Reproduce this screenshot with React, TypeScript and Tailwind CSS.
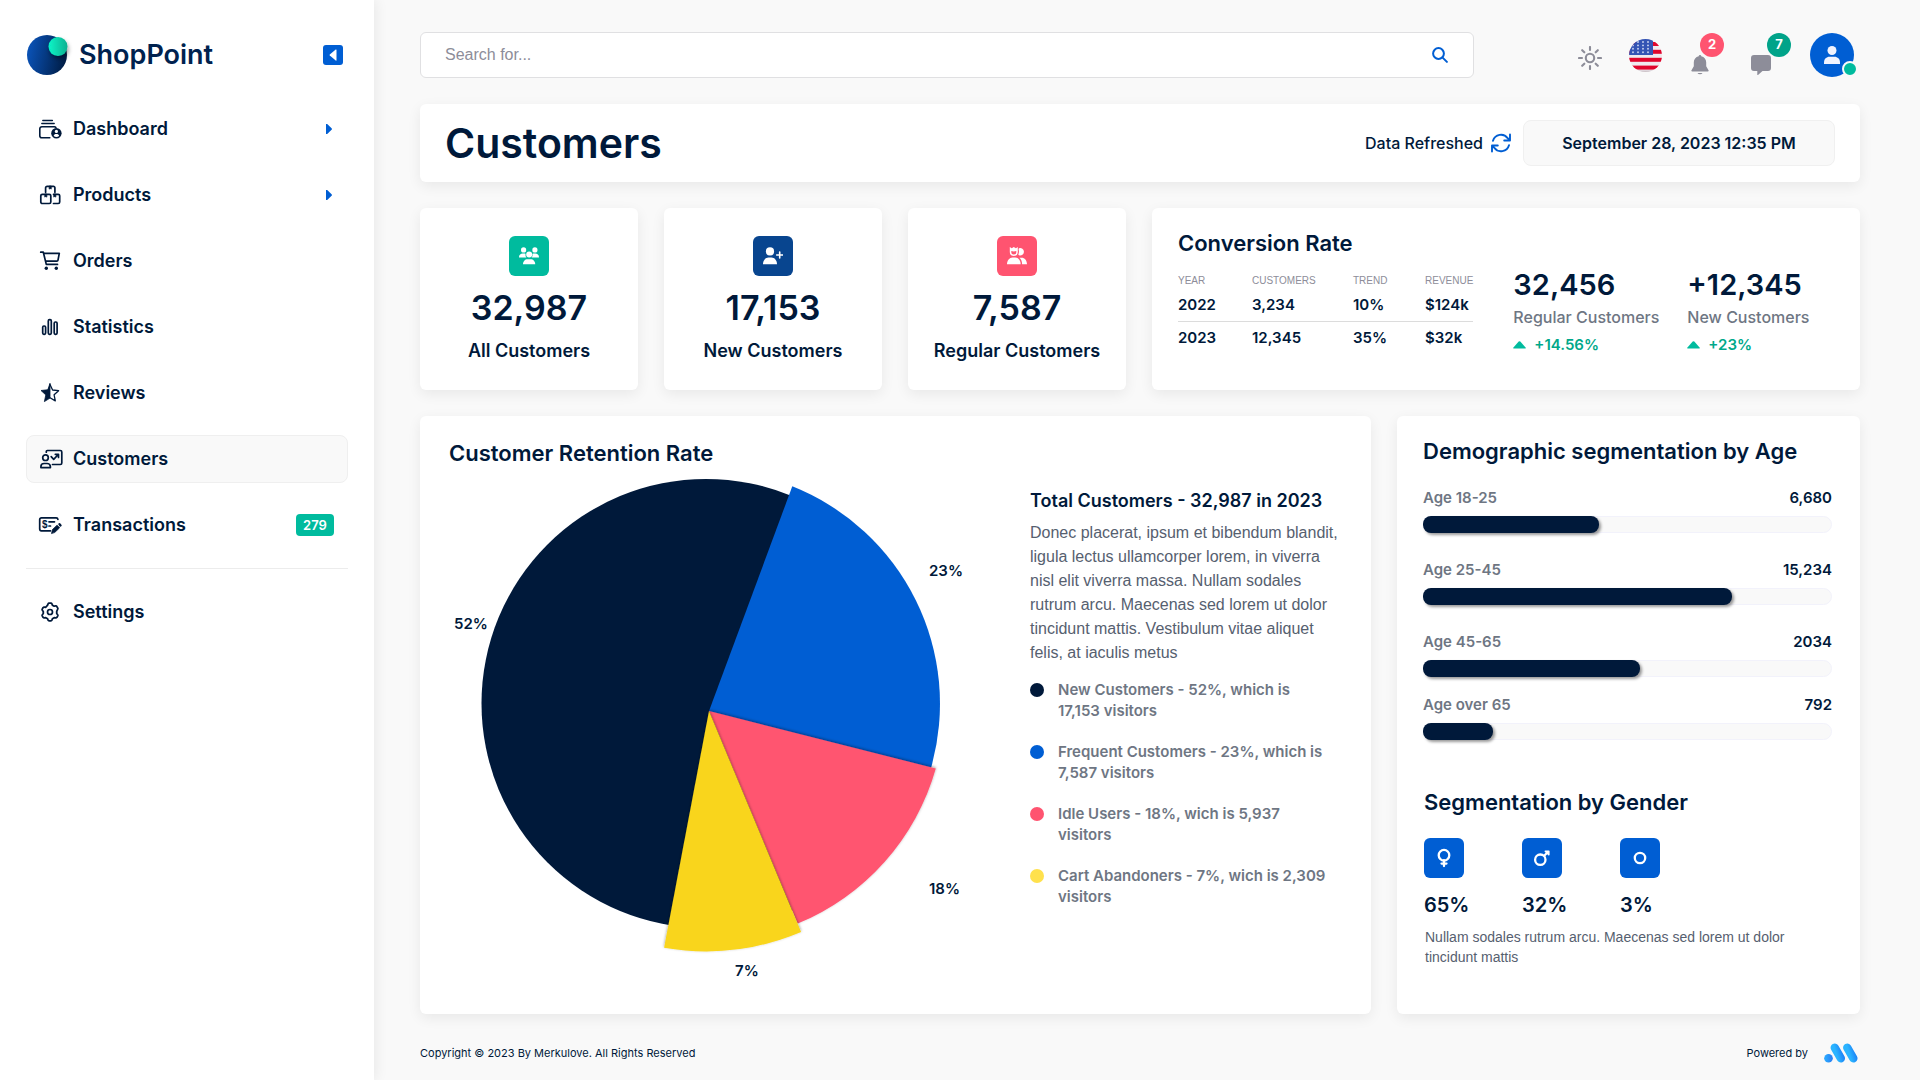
import React from "react";

const CARD = "rounded-md bg-white shadow-[0_4px_14px_rgba(0,0,0,0.07)]";

function LogoMark() {
  return (
    <svg width="42" height="40" viewBox="0 0 42 40" aria-hidden="true" className="shrink-0 overflow-visible">
      <defs>
        <linearGradient id="orb" x1="0" y1="0.4" x2="1" y2="0.6">
          <stop offset="0" stopColor="#0a53b8" />
          <stop offset="1" stopColor="#001c44" />
        </linearGradient>
        <linearGradient id="spot" x1="0" y1="0" x2="1" y2="0">
          <stop offset="0" stopColor="#06f5c8" />
          <stop offset="1" stopColor="#0fb090" />
        </linearGradient>
        <filter id="spotShadow" x="-50%" y="-50%" width="200%" height="200%">
          <feDropShadow dx="1" dy="3" stdDeviation="2" floodColor="#000" floodOpacity="0.4" />
        </filter>
      </defs>
      <circle cx="20" cy="20" r="20" fill="url(#orb)" />
      <circle cx="31" cy="11.5" r="9.5" fill="url(#spot)" filter="url(#spotShadow)" />
    </svg>
  );
}

function NavSvg({ children }: { children: React.ReactNode }) {
  return (
    <svg
      width="24"
      height="24"
      viewBox="0 0 24 24"
      fill="none"
      stroke="#00193a"
      strokeWidth="1.7"
      strokeLinecap="round"
      strokeLinejoin="round"
      aria-hidden="true"
      className="shrink-0 overflow-visible"
    >
      {children}
    </svg>
  );
}

const DashboardIcon = () => (
  <NavSvg>
    <path d="M4.8 3.5h9.6M3.8 6.5h12.400" strokeWidth="1.4" />
    <path d="M11.8 20.8H3.8a2 2 0 0 1-2-2v-7a2 2 0 0 1 2-2h12.400a2 2 0 0 1 1.700.8" strokeWidth="1.6" />
    <circle cx="18.400" cy="16.200" r="5.200" fill="#00193a" stroke="none" />
    <circle cx="18.400" cy="14.400" r="1.600" fill="#fff" stroke="none" />
    <path d="M15.700 18.900c.2-1.400 1.200-2 2.700-2s2.500.6 2.700 2c-1.600 1.300-3.800 1.300-5.400 0z" fill="#fff" stroke="none" />
  </NavSvg>
);

const ProductsIcon = () => (
  <NavSvg>
    <path d="M7.600 9.300V4.800a1.500 1.500 0 0 1 1.500-1.500h6.300a1.500 1.500 0 0 1 1.500 1.500v4.500" />
    <path d="M11.200 3.500v2.600l1-.7 1 .7V3.500z" fill="#00193a" strokeWidth="0.800" />
    <rect x="2.800" y="11.300" width="10" height="9.200" rx="1.500" />
    <path d="M6.800 11.500v2.600l1-.7 1 .7v-2.600z" fill="#00193a" strokeWidth="0.800" />
    <path d="M15.500 11.300h4.700a1.500 1.500 0 0 1 1.500 1.500v6.200a1.500 1.500 0 0 1-1.500 1.500h-4.700" />
    <path d="M15.800 11.500v2.600l1-.7 1 .7v-2.600z" fill="#00193a" strokeWidth="0.800" />
  </NavSvg>
);

const OrdersIcon = () => (
  <NavSvg>
    <path d="M2.700 3.200h2.600l3 12.200h11.200" />
    <path d="M5.800 4.300h15.500l-1.300 6.800a1.200 1.200 0 0 1-1.200 1H7.800" />
    <circle cx="8.300" cy="19.300" r="1.700" fill="#00193a" stroke="none" />
    <circle cx="18.300" cy="19.300" r="1.700" fill="#00193a" stroke="none" />
  </NavSvg>
);

const StatisticsIcon = () => (
  <NavSvg>
    <rect x="4.700" y="11" width="2.900" height="8.300" rx="1.200" />
    <rect x="10.300" y="4.700" width="3" height="14.600" rx="1.200" />
    <rect x="16.200" y="7" width="2.900" height="12.300" rx="1.200" />
  </NavSvg>
);

const ReviewsIcon = () => (
  <NavSvg>
    <path d="M12 3.400l2.600 5.600 6 .7-4.500 4.100 1.200 6.100L12 16.800" strokeWidth="1.300" />
    <path d="M12 2.700v14.400l-5.600 3.500 1.400-6.700L3 9.500l6.500-.7z" fill="#00193a" strokeWidth="0.800" />
  </NavSvg>
);

const CustomersIcon = () => (
  <NavSvg>
    <path d="M8.300 5.200V4.500a1 1 0 0 1 1-1h13a1.500 1.500 0 0 1 1.500 1.500v11a1.500 1.500 0 0 1-1.500 1.500h-7.800" />
    <circle cx="7.500" cy="10.700" r="2.800" />
    <path d="M2.900 20.600v-.8c0-2 1.500-3.300 3.200-3.300h3c1.700 0 3.300 1.300 3.300 3.300v.8z" />
    <path d="M13.200 9.600l2.500 2.700 4.500-4.800M17.300 7.300h3.200v3.200" />
  </NavSvg>
);

const TransactionsIcon = () => (
  <NavSvg>
    <path d="M12.500 17.800H3.400a1.700 1.700 0 0 1-1.700-1.700V6.500a1.700 1.700 0 0 1 1.700-1.700h14.800a1.700 1.700 0 0 1 1.700 1.500" />
    <path d="M11 8.800h5.500M11 13h1.500" />
    <path d="M13.600 20.200l.9-3.600 4.600-4.400 2.500 2.600-4.600 4.400z" fill="#00193a" strokeWidth="0.800" />
    <path d="M21.500 11.200l1 1.200" strokeWidth="2.400" />
    <text
      x="6.800"
      y="14.900"
      textAnchor="middle"
      fontSize="10"
      fontWeight="700"
      fill="#00193a"
      stroke="none"
      className="font-['Liberation_Sans',sans-serif]"
    >
      $
    </text>
  </NavSvg>
);

const SettingsIcon = () => (
  <NavSvg>
    <path
      d="M9.700 5l.5-1.300a1 1 0 0 1 .9-.6h1.800a1 1 0 0 1 .9.6l.5 1.300 1.700 1 1.500-.2a1 1 0 0 1 1 .5l.9 1.500a1 1 0 0 1-.1 1.100L18.400 11v2l.9 1.100a1 1 0 0 1 .1 1.100l-.9 1.500a1 1 0 0 1-1 .5l-1.500-.2-1.700 1-.5 1.300a1 1 0 0 1-.9.600h-1.800a1 1 0 0 1-.9-.6L9.700 18l-1.700-1-1.500.2a1 1 0 0 1-1-.5l-.9-1.500a1 1 0 0 1 .1-1.100L5.600 13v-2l-.9-1.100a1 1 0 0 1-.1-1.100l.9-1.500a1 1 0 0 1 1-.5l1.500.2z"
      transform="translate(-0.600 -0.100) scale(1.050)"
    />
    <circle cx="12" cy="12" r="2.500" />
  </NavSvg>
);

type NavEntry = {
  label: string;
  Icon: () => React.ReactElement;
  expandable?: boolean;
  active?: boolean;
  badge?: string;
};

const NAV: NavEntry[] = [
  { label: "Dashboard", Icon: DashboardIcon, expandable: true },
  { label: "Products", Icon: ProductsIcon, expandable: true },
  { label: "Orders", Icon: OrdersIcon },
  { label: "Statistics", Icon: StatisticsIcon },
  { label: "Reviews", Icon: ReviewsIcon },
  { label: "Customers", Icon: CustomersIcon, active: true },
  { label: "Transactions", Icon: TransactionsIcon, badge: "279" },
];

function NavLink({ label, Icon, expandable, active, badge }: NavEntry) {
  return (
    <a
      href="#"
      aria-current={active ? "page" : undefined}
      className={
        "flex h-12 items-center gap-[11px] rounded-lg border pr-[13px] pl-[11px] text-lg font-semibold " +
        (active ? "border-[#efefef] bg-[#f9f9f9]" : "border-transparent")
      }
    >
      <Icon />
      <span className="grow">{label}</span>
      {expandable && (
        <svg width="6" height="10" viewBox="0 0 6 10" fill="#005ed3" aria-hidden="true" className="mr-0.5">
          <path d="M0 0H1.200L5.600 4.200Q6.300 5 5.600 5.800L1.200 10H0z" />
        </svg>
      )}
      {badge && (
        <span className="flex h-[22px] w-[38px] items-center justify-center rounded bg-[#00bb9e] text-[13px] font-semibold text-white">
          {badge}
        </span>
      )}
    </a>
  );
}

function Sidebar() {
  return (
    <aside className="w-[374px] shrink-0 bg-white px-[26px] pt-[35px] shadow-[0_0_14px_rgba(0,0,0,0.09)]">
      <div className="flex h-10 items-center pr-[5px] pl-px">
        <LogoMark />
        <span className="ml-2.5 grow text-[27px] leading-8 font-semibold text-[#00224f]">ShopPoint</span>
        <button type="button" aria-label="Collapse sidebar" className="flex size-5 items-center justify-center rounded-[3px] bg-[#005ed3]">
          <svg width="8" height="12" viewBox="0 0 8 12" fill="#fff" aria-hidden="true">
            <path d="M7.500 1v10q0 1-.8.400L.8 6.600Q.2 6 .8 5.400L6.700.6Q7.500 0 7.500 1z" />
          </svg>
        </button>
      </div>
      <nav aria-label="Main" className="mt-[30px]">
        <ul className="flex flex-col gap-[18px]">
          {NAV.map((n) => (
            <li key={n.label}>
              <NavLink {...n} />
            </li>
          ))}
        </ul>
        <hr className="my-[19px] border-[#ececec]" />
        <NavLink label="Settings" Icon={SettingsIcon} />
      </nav>
    </aside>
  );
}

function Flag() {
  const stars: [number, number][] = [];
  for (let r = 0; r < 4; r++) for (let c = 0; c < 4; c++) stars.push([4 + c * 5, 3 + r * 3.4]);
  return (
    <svg width="33" height="33" viewBox="0 0 33 33" aria-hidden="true">
      <clipPath id="flagRound">
        <circle cx="16.500" cy="16.500" r="16.500" />
      </clipPath>
      <g clipPath="url(#flagRound)">
        <rect width="33" height="33" fill="#efe9ee" />
        {[3, 10.800, 18.800, 26.600].map((y) => (
          <rect key={y} y={y} width="33" height="4" fill="#e0052c" />
        ))}
        <rect y="31.500" width="33" height="2" fill="#cfc6cb" />
        <rect width="24" height="16" fill="#3454b4" />
        {stars.map(([x, y]) => (
          <circle key={x + "-" + y} cx={x} cy={y} r="0.950" fill="#c9d2ee" />
        ))}
      </g>
    </svg>
  );
}

function TopBar() {
  return (
    <header className="flex h-[46px] items-center">
      <form
        role="search"
        className="flex h-full grow items-center rounded-md border border-[#e0e0e2] bg-white pr-[25px] pl-6"
        onSubmit={(e) => e.preventDefault()}
      >
        <input
          type="text"
          aria-label="Search"
          placeholder="Search for..."
          className="grow bg-transparent font-['Liberation_Sans',Arial,sans-serif] text-base outline-none placeholder:text-[#8d8d99]"
        />
        <button type="submit" aria-label="Search">
          <svg width="16" height="16" viewBox="0 0 16 16" fill="none" stroke="#005ed3" strokeWidth="2" strokeLinecap="round" aria-hidden="true">
            <circle cx="6.500" cy="6.500" r="5.400" />
            <path d="M10.600 10.600l4.300 4.300" />
          </svg>
        </button>
      </form>
      <button type="button" aria-label="Toggle theme" className="ml-[104px] pt-1.5">
        <svg width="24" height="24" viewBox="0 0 24 24" fill="none" stroke="#8d8d99" strokeWidth="2.100" strokeLinecap="round" aria-hidden="true">
          <circle cx="12" cy="12" r="4.200" />
          <path d="M12 1v3M12 20v3M1 12h3M20 12h3M4.200 4.200l2.100 2.100M17.700 17.700l2.100 2.100M4.200 19.800l2.100-2.100M17.700 6.300l2.100-2.100" />
        </svg>
      </button>
      <button type="button" aria-label="Language: English (US)" className="ml-[27px]">
        <Flag />
      </button>
      <button type="button" aria-label="2 notifications" className="relative ml-[29px] flex h-11 w-[33px] items-end pb-0.5">
        <svg width="18" height="20" viewBox="0 0 18 20" fill="#8d8d99" aria-hidden="true">
          <path d="M9 0a1.300 1.300 0 0 1 1.300 1.200C13.300 1.900 15.200 4.300 15.200 7.300v3.900l2.300 4q.600 1.300-.8 1.300H1.300q-1.400 0-.8-1.300l2.300-4V7.300c0-3 1.900-5.400 4.900-6.100A1.300 1.300 0 0 1 9 0z" />
          <path d="M6.500 18h5a2.700 2 0 0 1-5 0z" />
        </svg>
        <span className="absolute top-0 right-0 flex size-6 items-center justify-center rounded-full bg-[#ff5470] text-[13px] font-bold text-white">2</span>
      </button>
      <button type="button" aria-label="7 messages" className="relative ml-[27px] flex h-11 w-10 items-end pb-0.5">
        <svg width="20" height="20" viewBox="0 0 20 20" fill="#8d8d99" aria-hidden="true">
          <path d="M3 0h14a3 3 0 0 1 3 3v10a3 3 0 0 1-3 3h-5.500L7 19.900Q6.300 20.300 6.300 19.400V16H3a3 3 0 0 1-3-3V3a3 3 0 0 1 3-3z" />
        </svg>
        <span className="absolute top-0 right-0 flex size-6 items-center justify-center rounded-full bg-[#00a389] text-[13px] font-bold text-white">7</span>
      </button>
      <button type="button" aria-label="Account" className="relative mr-1.5 ml-[19px] flex size-11 items-center justify-center rounded-full bg-[#005ed3]">
        <svg width="16" height="18" viewBox="0 0 16 18" fill="#f0f3ff" aria-hidden="true">
          <circle cx="8" cy="4.500" r="4.500" />
          <path d="M0 18v-1.500C0 13 2.500 10.800 5.500 10.800h5c3 0 5.500 2.200 5.500 5.700V18z" />
        </svg>
        <span className="absolute -right-1 bottom-0 size-4 rounded-full border-2 border-[#f9f9f9] bg-[#00bb9e]" />
      </button>
    </header>
  );
}

function RefreshIcon() {
  return (
    <svg width="20" height="20" viewBox="0 0 20 20" fill="none" stroke="#005ed3" strokeWidth="1.900" strokeLinecap="round" strokeLinejoin="round" aria-hidden="true">
      <path d="M2 7.800A8.300 8.300 0 0 1 16.700 5.200L18.500 7M19 1.500v6h-5.800" />
      <path d="M18 12.200A8.300 8.300 0 0 1 3.300 14.800L1.500 13M1 18.500v-6h5.800" />
    </svg>
  );
}

function TitleBar() {
  return (
    <section className={CARD + " flex h-[78px] items-center px-[25px]"}>
      <h1 className="grow text-[41px] leading-none font-semibold">Customers</h1>
      <span className="font-medium">Data Refreshed</span>
      <button type="button" aria-label="Refresh data" className="mr-3 ml-2">
        <RefreshIcon />
      </button>
      <time dateTime="2023-09-28T12:35" className="flex h-[46px] w-[312px] items-center justify-center rounded-lg border border-[#f0f0f0] bg-[#f9f9f9] font-semibold">
        September 28, 2023 12:35 PM
      </time>
    </section>
  );
}

const GroupIcon = () => (
  <svg width="20" height="18" viewBox="0 0 20 18" fill="#fff" aria-hidden="true">
    <circle cx="4.600" cy="2.900" r="2.600" />
    <circle cx="15.900" cy="2.900" r="2.600" />
    <path d="M0 10.500C0 8 1.500 6.500 3.500 6.500H5.800q.8 0 .8.700C6.300 8.500 6.600 9.700 7.400 10.600zM20 10.500c0-2.500-1.500-4-3.500-4h-2.300q-.8 0-.8.700c.3 1.300 0 2.500-.8 3.400z" />
    <circle cx="10.200" cy="7.600" r="3" />
    <path d="M4 17.300c0-3 1.900-5.100 4.600-5.100h3c2.700 0 4.600 2.100 4.600 5.100z" />
  </svg>
);

const AddUserIcon = () => (
  <svg width="20" height="18" viewBox="0 0 20 18" aria-hidden="true">
    <circle cx="7" cy="4.400" r="4.100" fill="#fff" />
    <path d="M0 17.300c0-4 2.500-6.800 5.500-6.800h3c3 0 5.500 2.800 5.500 6.800z" fill="#fff" />
    <path d="M16.700 5v6M13.700 8h6" stroke="#fff" strokeWidth="1.600" strokeLinecap="round" />
  </svg>
);

const RegularIcon = () => (
  <svg width="20" height="18" viewBox="0 0 20 18" fill="#fff" aria-hidden="true">
    <path d="M2.800 0l1.900 1.200L6.800 0l2.100 1.200L10.800 0v5a4 4 0 0 1-8 0zM4.300 4v1.100a2.500 2.500 0 0 0 5 0V4q-2.500.800-5 0z" fillRule="evenodd" />
    <path d="M12 1.200a3.700 3.700 0 1 1 .1 7q-1-.4-.6-1.200.9-2.300.1-4.600-.1-.8.400-1.200z" />
    <path d="M0 17.300C0 13.300 2.500 10.400 5.500 10.400h2.700c3 0 5.500 2.900 5.500 6.900zM12.500 10.700h2.200c2.900 0 5.300 2.600 5.300 6.600h-4.900c0-3-1-5.200-2.600-6.600z" />
  </svg>
);

function StatCard({ tone, icon, value, label }: { tone: string; icon: React.ReactElement; value: string; label: string }) {
  return (
    <section className={CARD + " flex h-[182px] flex-col items-center pt-7"}>
      <span className={"flex size-10 items-center justify-center rounded-md " + tone}>{icon}</span>
      <strong className="mt-3 text-[34px] leading-10 font-semibold">{value}</strong>
      <span className="mt-[11px] text-lg leading-6 font-semibold whitespace-nowrap">{label}</span>
    </section>
  );
}

function Metric({ value, label, trend }: { value: string; label: string; trend: string }) {
  return (
    <div className="leading-6 whitespace-nowrap">
      <div className="text-[29px] leading-9 font-semibold">{value}</div>
      <div className="mt-0.5 font-medium text-[#6e7683]">{label}</div>
      <div className="mt-1 flex items-center gap-2 text-[15px] font-semibold text-[#00a88a]">
        <svg width="13" height="8" viewBox="0 0 13 8" fill="#00bb9e" aria-hidden="true">
          <path d="M5.700.500Q6.500 0 7.300.500L12.800 6.700Q13.200 7.500 12.300 7.500H.7Q-.2 7.500.2 6.700z" />
        </svg>
        {trend}
      </div>
    </div>
  );
}

function ConversionCard() {
  return (
    <section className={CARD + " px-[26px] pt-[21px]"}>
      <h2 className="text-[22px] leading-7 font-semibold">Conversion Rate</h2>
      <div className="mt-2.5 flex items-start">
        <table className="mr-10 text-left text-[15px] font-semibold">
          <thead className="font-['Liberation_Sans',Arial,sans-serif] text-[10px] leading-4 text-[#8d8d99]">
            <tr className="h-[22px] align-bottom">
              <th scope="col" className="w-[74px] font-normal">YEAR</th>
              <th scope="col" className="w-[101px] font-normal">CUSTOMERS</th>
              <th scope="col" className="w-[72px] font-normal">TREND</th>
              <th scope="col" className="w-[45px] font-normal">REVENUE</th>
            </tr>
          </thead>
          <tbody>
            <tr className="h-8 border-b border-[#dcdcdc]">
              <td>2022</td>
              <td>3,234</td>
              <td>10%</td>
              <td>$124k</td>
            </tr>
            <tr className="h-[33px]">
              <td>2023</td>
              <td>12,345</td>
              <td>35%</td>
              <td>$32k</td>
            </tr>
          </tbody>
        </table>
        <div className="flex gap-7">
          <Metric value="32,456" label="Regular Customers" trend="+14.56%" />
          <Metric value="+12,345" label="New Customers" trend="+23%" />
        </div>
      </div>
    </section>
  );
}

/* Slices meet at (260, 241); their arcs are centred on (257, 234) with growing radii. */
function RetentionPie() {
  return (
    <svg width="530" height="516" viewBox="0 0 530 516" role="img" aria-label="Customer retention pie chart" className="shrink-0">
      <defs>
        <filter id="sliceShadow" x="-10%" y="-10%" width="120%" height="120%">
          <feDropShadow dx="0" dy="-1" stdDeviation="1.5" floodColor="#000" floodOpacity="0.4" />
        </filter>
      </defs>
      <circle cx="257" cy="233.500" r="224.500" fill="#00193a" />
      <path d="M260 241L343.300 16.300A234 234 0 0 1 482.300 297L348.700 453z" fill="#005ed3" />
      <path d="M260 241L486.800 298.600A238 238 0 0 1 348.700 453.600z" fill="#ff5470" filter="url(#sliceShadow)" />
      <path d="M260 241L352.100 462A247 247 0 0 1 215.100 477.800z" fill="#f9d51a" filter="url(#sliceShadow)" />
      <g fontSize="15" fontWeight="600" fill="#00193a">
        <text x="5" y="159">52%</text>
        <text x="480" y="106">23%</text>
        <text x="480" y="424">18%</text>
        <text x="286" y="506">7%</text>
      </g>
    </svg>
  );
}

const LEGEND = [
  { dot: "bg-[#00193a]", text: "New Customers - 52%, which is 17,153 visitors" },
  { dot: "bg-[#005ed3]", text: "Frequent Customers - 23%, which is 7,587 visitors" },
  { dot: "bg-[#ff5470]", text: "Idle Users - 18%, wich is 5,937 visitors" },
  { dot: "bg-[#ffe14d]", text: "Cart Abandoners - 7%, wich is 2,309 visitors" },
];

function RetentionCard() {
  return (
    <section className={CARD + " flex px-[29px] pt-[23px]"}>
      <div>
        <h2 className="text-[22px] leading-7 font-semibold">Customer Retention Rate</h2>
        <div className="mt-[3px]">
          <RetentionPie />
        </div>
      </div>
      <div className="ml-[51px] w-[310px] pt-[50px]">
        <h3 className="text-lg leading-6 font-semibold whitespace-nowrap">Total Customers - 32,987 in 2023</h3>
        <p className="mt-2 font-['Liberation_Sans',Arial,sans-serif] leading-6 text-[#56606f]">
          Donec placerat, ipsum et bibendum blandit, ligula lectus ullamcorper lorem, in viverra nisl elit viverra massa. Nullam
          sodales rutrum arcu. Maecenas sed lorem ut dolor tincidunt mattis. Vestibulum vitae aliquet felis, at iaculis metus
        </p>
        <ul className="mt-3.5 flex flex-col gap-5 pr-2.5">
          {LEGEND.map((l) => (
            <li key={l.text} className="flex gap-3.5 text-[15px] leading-[21px] font-semibold text-[#6e7683]">
              <span className={"mt-1 size-3.5 shrink-0 rounded-full " + l.dot} />
              {l.text}
            </li>
          ))}
        </ul>
      </div>
    </section>
  );
}

const AGES = [
  { label: "Age 18-25", value: "6,680", pct: 43.3, gap: "mt-[21px]" },
  { label: "Age 25-45", value: "15,234", pct: 75.8, gap: "mt-[25px]" },
  { label: "Age 45-65", value: "2034", pct: 53.4, gap: "mt-[25px]" },
  { label: "Age over 65", value: "792", pct: 17.1, gap: "mt-4" },
];

const GenderSvg = ({ children }: { children: React.ReactNode }) => (
  <svg width="20" height="20" viewBox="0 0 20 20" fill="none" stroke="#fff" strokeWidth="2.300" strokeLinecap="round" strokeLinejoin="round" aria-hidden="true">
    {children}
  </svg>
);

const GENDERS = [
  {
    name: "Female",
    pct: "65%",
    icon: (
      <GenderSvg>
        <circle cx="10" cy="7.200" r="5.300" />
        <path d="M10 12.500v5.500M7.500 15.600h5" />
      </GenderSvg>
    ),
  },
  {
    name: "Male",
    pct: "32%",
    icon: (
      <GenderSvg>
        <circle cx="8.300" cy="11.700" r="5.200" />
        <path d="M12.200 7.800l3-3" />
        <path d="M13.300 3.200h3.500v3.500z" fill="#fff" strokeWidth="1.600" />
      </GenderSvg>
    ),
  },
  {
    name: "Other",
    pct: "3%",
    icon: (
      <GenderSvg>
        <circle cx="10" cy="10" r="5.200" />
      </GenderSvg>
    ),
  },
];

function DemographicCard() {
  return (
    <section className={CARD + " pt-[21px] pr-7 pb-[45px] pl-[26px]"}>
      <h2 className="text-[22px] leading-7 font-semibold whitespace-nowrap">Demographic segmentation by Age</h2>
      {AGES.map((a) => (
        <div key={a.label} className={a.gap}>
          <div className="flex justify-between text-[15px] leading-6 font-semibold">
            <span className="text-[#6e7683]">{a.label}</span>
            <span>{a.value}</span>
          </div>
          <div role="img" aria-label={a.label + ": " + a.value} className="mt-1.5 h-[17px] rounded-full border border-[#f2f2fb] bg-[#f9f9f9]">
            <div className="-my-px -ml-px h-[17px] rounded-lg bg-[#00193a] shadow-[2px_2px_3px_rgba(0,0,0,0.4)]" style={{ width: a.pct + "%" }} />
          </div>
        </div>
      ))}
      <h2 className="mt-12 pl-px text-[22px] leading-7 font-semibold">Segmentation by Gender</h2>
      <ul className="mt-[22px] flex gap-[58px] pl-px">
        {GENDERS.map((g) => (
          <li key={g.name} className="w-10">
            <span role="img" aria-label={g.name} className="flex size-10 items-center justify-center rounded-md bg-[#005ed3]">
              {g.icon}
            </span>
            <span className="mt-[13px] block text-xl leading-7 font-semibold">{g.pct}</span>
          </li>
        ))}
      </ul>
      <p className="mt-2 pl-0.5 font-['Liberation_Sans',Arial,sans-serif] text-sm leading-5 text-[#56606f]">
        Nullam sodales rutrum arcu. Maecenas sed lorem ut dolor tincidunt mattis
      </p>
    </section>
  );
}

function Footer() {
  return (
    <footer className="flex h-[66px] items-center justify-between pt-3 pr-0.5 text-[11px]">
      <span>Copyright © 2023 By Merkulove. All Rights Reserved</span>
      <span className="flex items-center gap-4">
        Powered by
        <svg width="34" height="20" viewBox="0 0 34 20" fill="none" strokeLinecap="round" role="img" aria-label="Merkulove">
          <defs>
            <linearGradient id="barA" gradientUnits="userSpaceOnUse" x1="7" y1="12" x2="20" y2="8">
              <stop offset="0.400" stopColor="#2bb4ff" />
              <stop offset="1" stopColor="#1877f5" />
            </linearGradient>
            <linearGradient id="barB" gradientUnits="userSpaceOnUse" x1="20" y1="12" x2="33" y2="8">
              <stop offset="0.400" stopColor="#2bb4ff" />
              <stop offset="1" stopColor="#1877f5" />
            </linearGradient>
            <linearGradient id="dotC" x1="0" y1="0" x2="1" y2="0">
              <stop offset="0.200" stopColor="#2ba6ff" />
              <stop offset="1" stopColor="#2a7af0" />
            </linearGradient>
          </defs>
          <circle cx="4.500" cy="15.200" r="4.300" fill="url(#dotC)" />
          <path d="M10.800 4.700l6 10.600" stroke="url(#barA)" strokeWidth="8.400" />
          <path d="M23.300 4.700l6 10.600" stroke="url(#barB)" strokeWidth="8.400" />
        </svg>
      </span>
    </footer>
  );
}

export default function App() {
  return (
    <div className="flex min-h-screen bg-[#f9f9f9] font-['Inter','Liberation_Sans',sans-serif] text-base text-[#00193a]">
      <Sidebar />
      <main className="flex grow flex-col pt-8 pr-[60px] pl-[46px]">
        <TopBar />
        <div className="mt-[26px] flex grow flex-col gap-[26px]">
          <TitleBar />
          <div className="grid grid-cols-[218fr_218fr_218fr_708fr] gap-[26px]">
            <StatCard tone="bg-[#00bb9e]" icon={<GroupIcon />} value="32,987" label="All Customers" />
            <StatCard tone="bg-[#08458f]" icon={<AddUserIcon />} value="17,153" label="New Customers" />
            <StatCard tone="bg-[#ff5470]" icon={<RegularIcon />} value="7,587" label="Regular Customers" />
            <ConversionCard />
          </div>
          <div className="grid grow grid-cols-[951fr_463fr] gap-[26px]">
            <RetentionCard />
            <DemographicCard />
          </div>
        </div>
        <Footer />
      </main>
    </div>
  );
}
